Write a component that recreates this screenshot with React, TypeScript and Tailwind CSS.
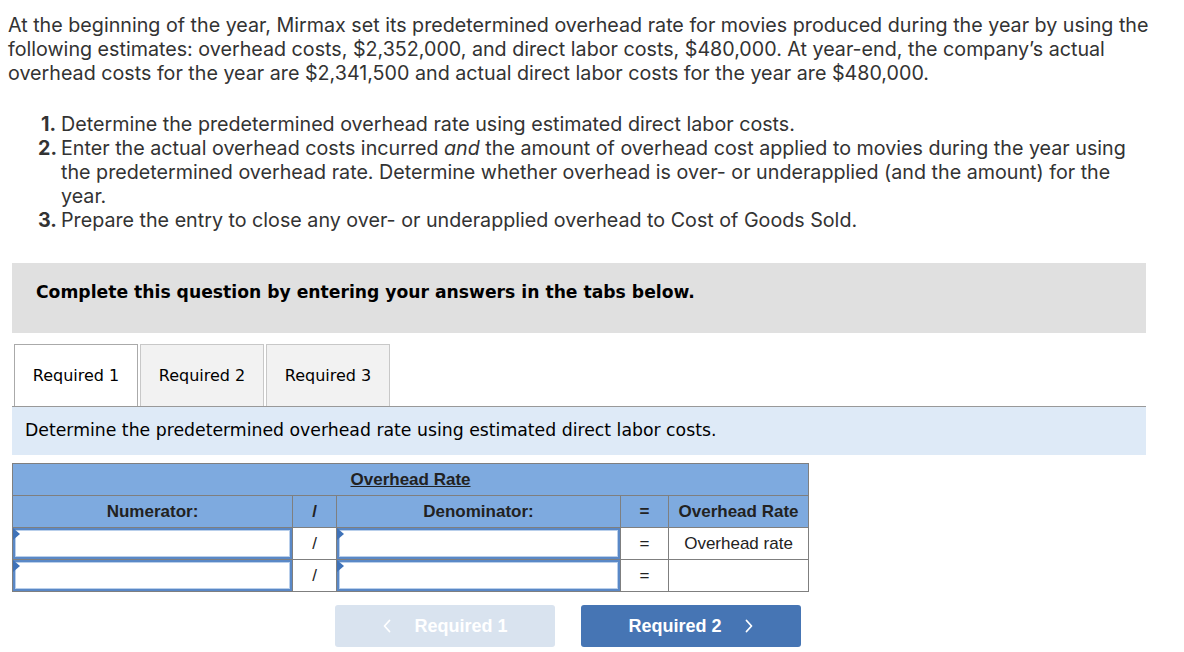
import React from "react";

const sans = { fontFamily: "Inter, Lato, sans-serif" } as React.CSSProperties;

function InputCell() {
  return (
    <td className="border border-[#7f7f7f] p-0 h-[32px]">
      <div className="relative h-[31px] border-2 border-[#5a88c6] bg-white shadow-[inset_0_0_0_1px_#b9cfeb]">
        <div className="absolute -left-[2px] -top-[2px] w-0 h-0 border-t-[6px] border-b-[6px] border-l-[7px] border-t-transparent border-b-transparent border-l-[#3f72b8]" />
      </div>
    </td>
  );
}

function Chevron({ dir }: { dir: "left" | "right" }) {
  return (
    <svg width="10" height="16" viewBox="0 0 10 16" fill="none" stroke="currentColor" strokeWidth="1.8" strokeLinecap="round" strokeLinejoin="round">
      {dir === "left" ? <path d="M7.5 2.5 L2.5 8 L7.5 13.5" /> : <path d="M2.5 2.5 L7.5 8 L2.5 13.5" />}
    </svg>
  );
}

export default function App() {
  return (
    <div className="bg-white w-[1184px] h-[652px] overflow-hidden text-[#333]">
      <div className="pl-[8px] pt-[13px] text-[19.7px] leading-[24px] whitespace-nowrap" style={sans}>
        At the beginning of the year, Mirmax set its predetermined overhead rate for movies produced during the year by using the
        <br />
        following estimates: overhead costs, $2,352,000, and direct labor costs, $480,000. At year-end, the company’s actual
        <br />
        overhead costs for the year are $2,341,500 and actual direct labor costs for the year are $480,000.
      </div>
      <div className="mt-[27px] pl-[38px] text-[19.7px] leading-[24px] whitespace-nowrap" style={sans}>
        <div className="flex">
          <span className="w-[23px] font-bold text-right pr-[5px]">1.</span>
          <span>Determine the predetermined overhead rate using estimated direct labor costs.</span>
        </div>
        <div className="flex">
          <span className="w-[23px] font-bold text-right pr-[5px]">2.</span>
          <span>
            Enter the actual overhead costs incurred <i>and</i> the amount of overhead cost applied to movies during the year using
            <br />
            the predetermined overhead rate. Determine whether overhead is over- or underapplied (and the amount) for the
            <br />
            year.
          </span>
        </div>
        <div className="flex">
          <span className="w-[23px] font-bold text-right pr-[5px]">3.</span>
          <span>Prepare the entry to close any over- or underapplied overhead to Cost of Goods Sold.</span>
        </div>
      </div>

      <div className="ml-[12px] w-[1134px] mt-[31px]" style={{ fontFamily: "'DejaVu Sans', Verdana, sans-serif" }}>
        <div className="h-[70px] bg-[#e0e0e0] pl-[24px] pt-[17px] text-[17.2px] font-bold text-black">
          Complete this question by entering your answers in the tabs below.
        </div>
        <div className="mt-[11px] flex gap-[2px] pl-[2px] border-b border-[#999] text-[16px] text-black">
          <div className="w-[124px] h-[62px] border border-b-0 border-[#aaa] bg-white flex items-center justify-center -mb-px relative">Required 1</div>
          <div className="w-[124px] h-[62px] border border-b-0 border-[#c8c8c8] bg-[#f2f2f2] flex items-center justify-center">Required 2</div>
          <div className="w-[124px] h-[62px] border border-b-0 border-[#c8c8c8] bg-[#f2f2f2] flex items-center justify-center">Required 3</div>
        </div>
        <div className="h-[48px] bg-[#deeaf7] pl-[13px] flex items-center text-[17.3px] text-black">
          Determine the predetermined overhead rate using estimated direct labor costs.
        </div>
      </div>

      <table className="ml-[12px] mt-[8px] border-collapse text-[17px] text-[#222]" style={{ fontFamily: "'Liberation Sans', Arial, sans-serif" }}>
        <colgroup>
          <col className="w-[280px]" />
          <col className="w-[44px]" />
          <col className="w-[284px]" />
          <col className="w-[48px]" />
          <col className="w-[140px]" />
        </colgroup>
        <tbody>
          <tr className="h-[32px] bg-[#7eaadf]">
            <td colSpan={5} className="border border-[#7f7f7f] text-center font-bold underline">Overhead Rate</td>
          </tr>
          <tr className="h-[32px] bg-[#7eaadf] font-bold">
            <td className="border border-[#7f7f7f] text-center">Numerator:</td>
            <td className="border border-[#7f7f7f] text-center">/</td>
            <td className="border border-[#7f7f7f] text-center">Denominator:</td>
            <td className="border border-[#7f7f7f] text-center">=</td>
            <td className="border border-[#7f7f7f] text-center">Overhead Rate</td>
          </tr>
          <tr className="h-[32px]">
            <InputCell />
            <td className="border border-[#7f7f7f] text-center">/</td>
            <InputCell />
            <td className="border border-[#7f7f7f] text-center">=</td>
            <td className="border border-[#7f7f7f] text-center">Overhead rate</td>
          </tr>
          <tr className="h-[32px]">
            <InputCell />
            <td className="border border-[#7f7f7f] text-center">/</td>
            <InputCell />
            <td className="border border-[#7f7f7f] text-center">=</td>
            <td className="border border-[#7f7f7f] text-center"></td>
          </tr>
        </tbody>
      </table>

      <div className="mt-[13px] flex gap-[26px] pl-[335px] text-[18px] font-bold text-white" style={{ fontFamily: "'Liberation Sans', Arial, sans-serif" }}>
        <div className="w-[220px] h-[42px] rounded-[3px] bg-[#d9e3ef] flex items-center justify-center gap-[22px]">
          <Chevron dir="left" />
          <span>Required 1</span>
        </div>
        <div className="w-[220px] h-[42px] rounded-[3px] bg-[#4675b4] flex items-center justify-center gap-[22px]">
          <span>Required 2</span>
          <Chevron dir="right" />
        </div>
      </div>
    </div>
  );
}
